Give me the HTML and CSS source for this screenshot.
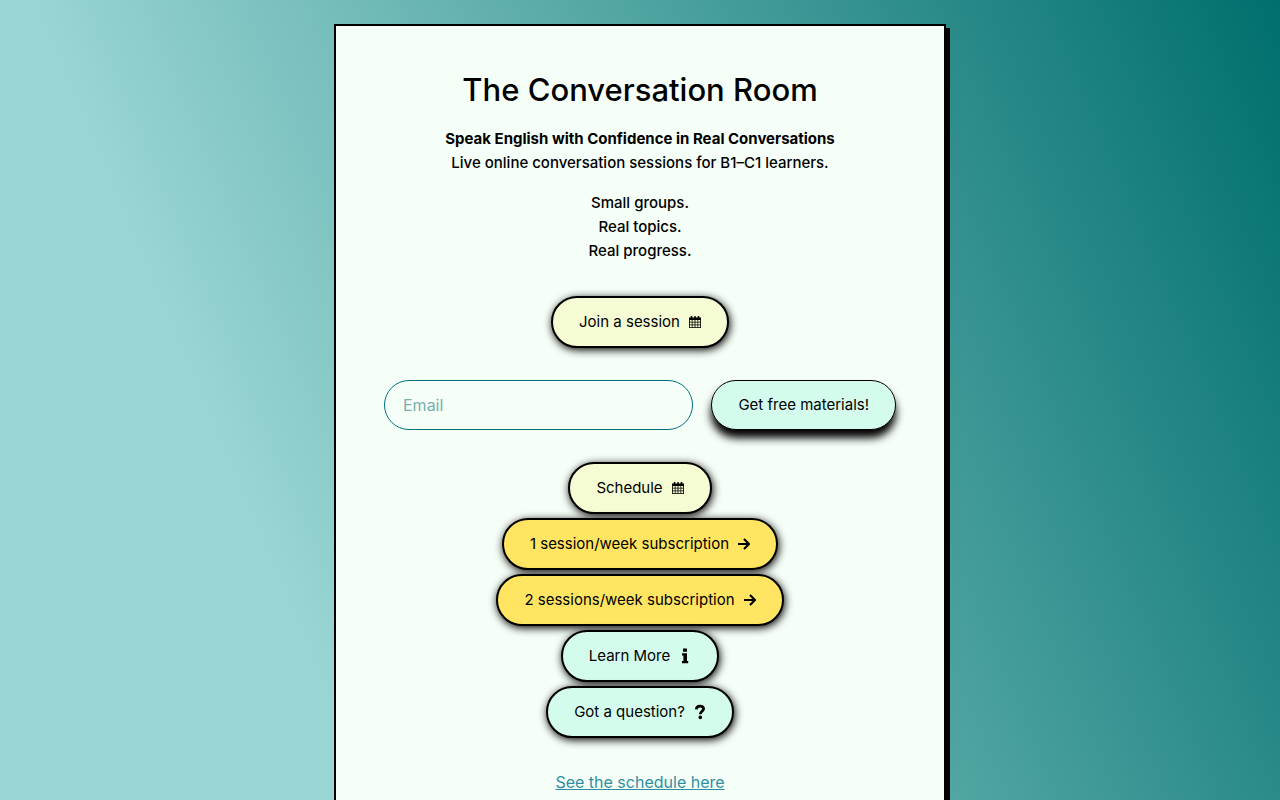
FILE: index.html
```html
<!DOCTYPE html>
<html lang="en">
<head>
<meta charset="utf-8">
<meta name="viewport" content="width=device-width, initial-scale=1">
<title>The Conversation Room</title>
<link rel="stylesheet" href="styles.css">
</head>
<body>
<svg class="sprite" aria-hidden="true">
  <symbol id="calendar" viewBox="0 0 12 12">
    <path fill="currentColor" fill-rule="evenodd" d="M0 1.5h1.6V.6Q1.6 0 2.2 0h.6q.6 0 .6.6v.9h1.8V.6Q5.2 0 5.8 0h.4q.6 0 .6.6v.9h1.8V.6Q8.600 0 9.2 0h.6q.6 0 .6.6v.9H12V12H0zM.8 4v1.800h2V4zm2.700 0v1.800h2.100V4zm2.900 0v1.800h2.100V4zm2.800 0v1.800h2V4zM.8 6.600v1.800h2V6.600zm2.700 0v1.800h2.100V6.600zm2.900 0v1.800h2.100V6.600zm2.800 0v1.800h2V6.600zM.8 9.200v2h2v-2zm2.700 0v2h2.100v-2zm2.900 0v2h2.100v-2zm2.800 0v2h2v-2z"/>
  </symbol>
  <symbol id="arrow" viewBox="0 0 12 12">
    <path fill="none" stroke="currentColor" stroke-width="2.200" stroke-linejoin="round" d="M0 6h11M6 1l5 5-5 5"/>
  </symbol>
  <symbol id="info" viewBox="0 0 12 16">
    <path fill="currentColor" d="M4 .5h4v3.200H4zM3 5.300h5V13h1.200v2.300H3V13h1.400V7.500H3z"/>
  </symbol>
  <symbol id="question" viewBox="0 0 12 16">
    <path fill="none" stroke="currentColor" stroke-width="2.800" d="M2.300 5.300C2.600 1.200 9.600 1.100 9.600 4.800c0 2.500-3.300 2.500-3.300 5.500"/>
    <circle cx="6.300" cy="13.400" r="1.800" fill="currentColor"/>
  </symbol>
</svg>
<main class="card">
  <h1 class="title">The Conversation Room</h1>
  <p class="copy"><strong>Speak English with Confidence in Real Conversations</strong><br>Live online conversation sessions for B1–C1 learners.</p>
  <p class="copy">Small groups.<br>Real topics.<br>Real progress.</p>
  <div class="actions">
    <a class="button cream" href="#join">Join a session<svg class="icon small"><use href="#calendar"/></svg></a>
  </div>
  <form class="signup">
    <input class="email" type="email" placeholder="Email" aria-label="Email">
    <button class="button submit" type="submit">Get free materials!</button>
  </form>
  <div class="actions">
    <a class="button cream" href="#schedule">Schedule<svg class="icon small"><use href="#calendar"/></svg></a>
    <a class="button yellow" href="#weekly">1 session/week subscription<svg class="icon small"><use href="#arrow"/></svg></a>
    <a class="button yellow" href="#twice">2 sessions/week subscription<svg class="icon small"><use href="#arrow"/></svg></a>
    <a class="button mint" href="#more">Learn More<svg class="icon tall"><use href="#info"/></svg></a>
    <a class="button mint" href="#contact">Got a question?<svg class="icon tall"><use href="#question"/></svg></a>
  </div>
  <p class="note"><a class="link" href="#schedule">See the schedule here</a></p>
</main>
</body>
</html>
```
FILE: styles.css
```css
* { box-sizing: border-box; }

body {
  margin: 0;
  min-height: 100vh;
  padding: 24px;
  color: #000;
  font: 16px/24px Inter, sans-serif;
  background: linear-gradient(67deg, #99d5d3 23%, #006f6d) fixed;
}

.sprite { position: absolute; width: 0; height: 0; }

.card {
  max-width: 612px;
  margin: 0 auto;
  padding: 40px 48px;
  text-align: center;
  background: #f6fff7;
  border: 2px solid #000;
  box-shadow: 4px 4px 0 #000;
}

.title {
  margin: 0 0 14px;
  font-size: 31px;
  line-height: 47px;
  font-weight: 500;
}

.copy {
  margin: 0 0 16px;
  font-size: 15px;
  font-weight: 500;
}

.copy strong { font-weight: 700; }

.actions {
  display: flex;
  flex-direction: column;
  align-items: center;
  gap: 4px;
  margin-top: 32px;
}

.copy + .actions { margin-top: 33px; }

.button {
  display: flex;
  align-items: center;
  justify-content: center;
  gap: 9px;
  height: 52px;
  padding: 0 26px;
  color: #000;
  font: 400 15px/24px Inter, sans-serif;
  white-space: nowrap;
  text-decoration: none;
  border: 2px solid #000;
  border-radius: 26px;
  box-shadow: 1px 2px 8px #000;
}

.cream { background: #f5fbd3; }
.yellow { background: #ffe561; }
.mint { background: #d3fced; }

.icon { flex: none; width: 12px; }
.small { height: 12px; }
.tall { height: 16px; }

.signup {
  display: flex;
  gap: 18px;
  margin-top: 32px;
}

.email {
  flex: 1;
  min-width: 0;
  height: 50px;
  padding: 0 18px;
  color: #006f6d;
  font: 16px/24px Inter, sans-serif;
  background: transparent;
  border: 1px solid #006f7d;
  border-radius: 25px;
}

.email::placeholder { color: #77aeb0; opacity: 1; }

.submit {
  height: 50px;
  padding: 0 26px;
  background: #d3fced;
  border-width: 1px;
  box-shadow: 0 8px 8px #000;
}

.note { margin: 32px 0 0; }

.link { color: #2e8fa3; }
```
